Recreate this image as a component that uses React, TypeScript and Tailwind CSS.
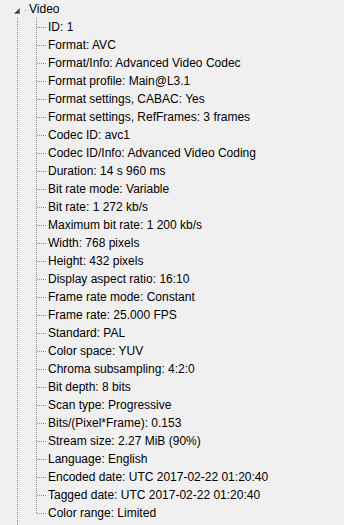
import React from "react";

const rows = [
  "ID: 1",
  "Format: AVC",
  "Format/Info: Advanced Video Codec",
  "Format profile: Main@L3.1",
  "Format settings, CABAC: Yes",
  "Format settings, RefFrames: 3 frames",
  "Codec ID: avc1",
  "Codec ID/Info: Advanced Video Coding",
  "Duration: 14 s 960 ms",
  "Bit rate mode: Variable",
  "Bit rate: 1 272 kb/s",
  "Maximum bit rate: 1 200 kb/s",
  "Width: 768 pixels",
  "Height: 432 pixels",
  "Display aspect ratio: 16:10",
  "Frame rate mode: Constant",
  "Frame rate: 25.000 FPS",
  "Standard: PAL",
  "Color space: YUV",
  "Chroma subsampling: 4:2:0",
  "Bit depth: 8 bits",
  "Scan type: Progressive",
  "Bits/(Pixel*Frame): 0.153",
  "Stream size: 2.27 MiB (90%)",
  "Language: English",
  "Encoded date: UTC 2017-02-22 01:20:40",
  "Tagged date: UTC 2017-02-22 01:20:40",
  "Color range: Limited",
];

const vDots =
  "w-px shrink-0 bg-[linear-gradient(to_bottom,#8c8c8c_50%,transparent_50%)] bg-[length:1px_2px]";
const hDots =
  "h-px bg-[linear-gradient(to_right,#8c8c8c_50%,transparent_50%)] bg-[length:2px_1px]";

export default function App() {
  return (
    <div
      className="w-[344px] h-[525px] bg-[#f0f0f0] overflow-hidden flex flex-col text-[12px] leading-[18px] text-black"
      style={{ fontFamily: '"Liberation Sans", Arial, sans-serif' }}
    >
      <div className="flex h-[18px] shrink-0 items-center">
        <div className="w-[14px] shrink-0" />
        <svg width="6" height="6" viewBox="0 0 6 6" className="shrink-0 mt-[3px]">
          <polygon points="5.5,0.5 5.5,5.5 0.5,5.5" fill="#3a3a3a" stroke="#555" strokeWidth="0.5" />
        </svg>
        <div className="w-[5px] shrink-0" />
        <div className="w-px h-px bg-[#8c8c8c] shrink-0 mt-[3px]" />
        <div className="w-[3px] shrink-0" />
        <span className="whitespace-nowrap">Video</span>
      </div>
      <div className="flex flex-1">
        <div className="w-[17px] shrink-0" />
        <div className={`${vDots} self-stretch`} />
        <div className="flex flex-col pl-[18px]">
          {rows.map((r, i) => {
            const last = i === rows.length - 1;
            return (
              <div key={i} className="flex h-[18px]">
                <div className="flex flex-col w-[12px] shrink-0">
                  <div className="flex h-[10px]">
                    <div className={`${vDots} h-[10px]`} />
                    <div className="flex flex-col justify-end">
                      <div className={`${hDots} w-[9px]`} />
                    </div>
                  </div>
                  {!last && <div className={`${vDots} h-[8px]`} />}
                </div>
                <span className="whitespace-nowrap">{r}</span>
              </div>
            );
          })}
        </div>
      </div>
    </div>
  );
}
